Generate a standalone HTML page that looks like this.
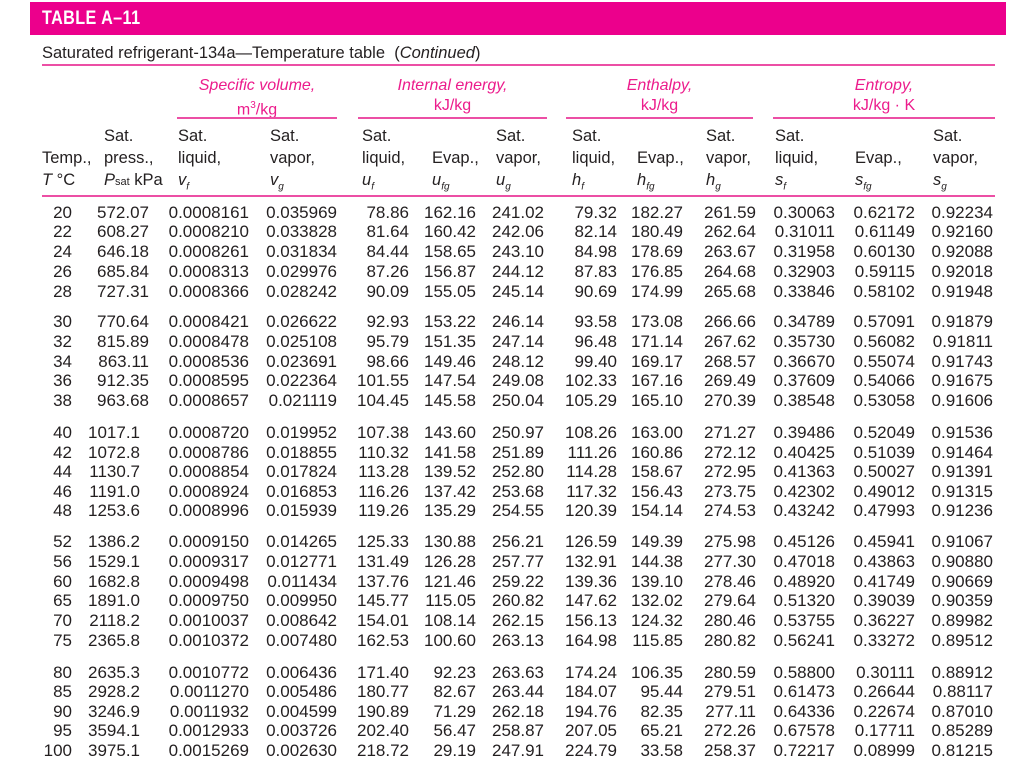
<!DOCTYPE html>
<html><head><meta charset="utf-8"><style>
body{margin:0;width:1024px;height:770px;background:#fff;position:relative;overflow:hidden;font-family:"Liberation Sans",sans-serif;color:#231f20;font-size:16px}
.bar{position:absolute;left:30px;top:2px;width:976px;height:33px;background:#ec008c}
.bar span{position:absolute;left:12px;top:6px;color:#fff;font-weight:bold;font-size:19px;transform:scaleX(0.85);transform-origin:left;letter-spacing:0.5px}
.sub{position:absolute;left:42px;top:44px;font-size:16.5px}
.ln{position:absolute;height:2px;background:#ec4fa5}
.g{position:absolute;color:#ec1c8c;text-align:center;font-size:16px;line-height:20px}
.h{position:absolute;line-height:22px;font-size:16.5px}
.r{position:absolute;left:0;width:1024px;height:20px;line-height:20px;font-size:17px}
.r span{position:absolute;text-align:right;white-space:nowrap}
.r span:nth-child(1){right:952px}.r span:nth-child(2){right:875px}.r span:nth-child(3){right:775px}.r span:nth-child(4){right:687px}.r span:nth-child(5){right:615px}.r span:nth-child(6){right:548px}.r span:nth-child(7){right:480px}.r span:nth-child(8){right:407px}.r span:nth-child(9){right:341px}.r span:nth-child(10){right:268px}.r span:nth-child(11){right:189px}.r span:nth-child(12){right:109px}.r span:nth-child(13){right:31px}
.r span.p1{right:884px!important}
i sub{font-size:10px}
</style></head><body>
<div class="bar"><span>TABLE A–11</span></div>
<div class="sub">Saturated refrigerant-134a—Temperature table &nbsp;(<i>Continued</i>)</div>
<div class="ln" style="left:42px;top:64px;width:953px"></div>
<div class="g" style="left:177px;top:76px;width:160px"><i>Specific volume,</i><br>m<sup style="font-size:10px">3</sup>/kg</div>
<div class="ln" style="left:177px;top:117px;width:160px"></div>
<div class="g" style="left:358px;top:76px;width:189px"><i>Internal energy,</i><br>kJ/kg</div>
<div class="ln" style="left:358px;top:117px;width:189px"></div>
<div class="g" style="left:566px;top:76px;width:187px"><i>Enthalpy,</i><br>kJ/kg</div>
<div class="ln" style="left:566px;top:117px;width:187px"></div>
<div class="g" style="left:773px;top:76px;width:222px"><i>Entropy,</i><br>kJ/kg · K</div>
<div class="ln" style="left:773px;top:117px;width:222px"></div>
<div class="h" style="left:42px;top:147px">Temp.,<br><i>T</i> °C</div>
<div class="h" style="left:104px;top:125px">Sat.<br>press.,<br><i>P</i><span style="font-size:11px">sat</span> kPa</div>
<div class="h" style="left:178px;top:125px">Sat.<br>liquid,<br><i>v<sub>f</sub></i></div>
<div class="h" style="left:270px;top:125px">Sat.<br>vapor,<br><i>v<sub>g</sub></i></div>
<div class="h" style="left:362px;top:125px">Sat.<br>liquid,<br><i>u<sub>f</sub></i></div>
<div class="h" style="left:432px;top:147px">Evap.,<br><i>u<sub>fg</sub></i></div>
<div class="h" style="left:496px;top:125px">Sat.<br>vapor,<br><i>u<sub>g</sub></i></div>
<div class="h" style="left:572px;top:125px">Sat.<br>liquid,<br><i>h<sub>f</sub></i></div>
<div class="h" style="left:637px;top:147px">Evap.,<br><i>h<sub>fg</sub></i></div>
<div class="h" style="left:706px;top:125px">Sat.<br>vapor,<br><i>h<sub>g</sub></i></div>
<div class="h" style="left:775px;top:125px">Sat.<br>liquid,<br><i>s<sub>f</sub></i></div>
<div class="h" style="left:855px;top:147px">Evap.,<br><i>s<sub>fg</sub></i></div>
<div class="h" style="left:933px;top:125px">Sat.<br>vapor,<br><i>s<sub>g</sub></i></div>
<div class="ln" style="left:42px;top:195px;width:953px"></div>

<div class="r" style="top:203px"><span>20</span><span>572.07</span><span>0.0008161</span><span>0.035969</span><span>78.86</span><span>162.16</span><span>241.02</span><span>79.32</span><span>182.27</span><span>261.59</span><span>0.30063</span><span>0.62172</span><span>0.92234</span></div>
<div class="r" style="top:222px"><span>22</span><span>608.27</span><span>0.0008210</span><span>0.033828</span><span>81.64</span><span>160.42</span><span>242.06</span><span>82.14</span><span>180.49</span><span>262.64</span><span>0.31011</span><span>0.61149</span><span>0.92160</span></div>
<div class="r" style="top:242px"><span>24</span><span>646.18</span><span>0.0008261</span><span>0.031834</span><span>84.44</span><span>158.65</span><span>243.10</span><span>84.98</span><span>178.69</span><span>263.67</span><span>0.31958</span><span>0.60130</span><span>0.92088</span></div>
<div class="r" style="top:262px"><span>26</span><span>685.84</span><span>0.0008313</span><span>0.029976</span><span>87.26</span><span>156.87</span><span>244.12</span><span>87.83</span><span>176.85</span><span>264.68</span><span>0.32903</span><span>0.59115</span><span>0.92018</span></div>
<div class="r" style="top:282px"><span>28</span><span>727.31</span><span>0.0008366</span><span>0.028242</span><span>90.09</span><span>155.05</span><span>245.14</span><span>90.69</span><span>174.99</span><span>265.68</span><span>0.33846</span><span>0.58102</span><span>0.91948</span></div>

<div class="r" style="top:312px"><span>30</span><span>770.64</span><span>0.0008421</span><span>0.026622</span><span>92.93</span><span>153.22</span><span>246.14</span><span>93.58</span><span>173.08</span><span>266.66</span><span>0.34789</span><span>0.57091</span><span>0.91879</span></div>
<div class="r" style="top:332px"><span>32</span><span>815.89</span><span>0.0008478</span><span>0.025108</span><span>95.79</span><span>151.35</span><span>247.14</span><span>96.48</span><span>171.14</span><span>267.62</span><span>0.35730</span><span>0.56082</span><span>0.91811</span></div>
<div class="r" style="top:352px"><span>34</span><span>863.11</span><span>0.0008536</span><span>0.023691</span><span>98.66</span><span>149.46</span><span>248.12</span><span>99.40</span><span>169.17</span><span>268.57</span><span>0.36670</span><span>0.55074</span><span>0.91743</span></div>
<div class="r" style="top:371px"><span>36</span><span>912.35</span><span>0.0008595</span><span>0.022364</span><span>101.55</span><span>147.54</span><span>249.08</span><span>102.33</span><span>167.16</span><span>269.49</span><span>0.37609</span><span>0.54066</span><span>0.91675</span></div>
<div class="r" style="top:391px"><span>38</span><span>963.68</span><span>0.0008657</span><span>0.021119</span><span>104.45</span><span>145.58</span><span>250.04</span><span>105.29</span><span>165.10</span><span>270.39</span><span>0.38548</span><span>0.53058</span><span>0.91606</span></div>

<div class="r" style="top:423px"><span>40</span><span class="p1">1017.1</span><span>0.0008720</span><span>0.019952</span><span>107.38</span><span>143.60</span><span>250.97</span><span>108.26</span><span>163.00</span><span>271.27</span><span>0.39486</span><span>0.52049</span><span>0.91536</span></div>
<div class="r" style="top:443px"><span>42</span><span class="p1">1072.8</span><span>0.0008786</span><span>0.018855</span><span>110.32</span><span>141.58</span><span>251.89</span><span>111.26</span><span>160.86</span><span>272.12</span><span>0.40425</span><span>0.51039</span><span>0.91464</span></div>
<div class="r" style="top:462px"><span>44</span><span class="p1">1130.7</span><span>0.0008854</span><span>0.017824</span><span>113.28</span><span>139.52</span><span>252.80</span><span>114.28</span><span>158.67</span><span>272.95</span><span>0.41363</span><span>0.50027</span><span>0.91391</span></div>
<div class="r" style="top:482px"><span>46</span><span class="p1">1191.0</span><span>0.0008924</span><span>0.016853</span><span>116.26</span><span>137.42</span><span>253.68</span><span>117.32</span><span>156.43</span><span>273.75</span><span>0.42302</span><span>0.49012</span><span>0.91315</span></div>
<div class="r" style="top:501px"><span>48</span><span class="p1">1253.6</span><span>0.0008996</span><span>0.015939</span><span>119.26</span><span>135.29</span><span>254.55</span><span>120.39</span><span>154.14</span><span>274.53</span><span>0.43242</span><span>0.47993</span><span>0.91236</span></div>

<div class="r" style="top:532px"><span>52</span><span class="p1">1386.2</span><span>0.0009150</span><span>0.014265</span><span>125.33</span><span>130.88</span><span>256.21</span><span>126.59</span><span>149.39</span><span>275.98</span><span>0.45126</span><span>0.45941</span><span>0.91067</span></div>
<div class="r" style="top:552px"><span>56</span><span class="p1">1529.1</span><span>0.0009317</span><span>0.012771</span><span>131.49</span><span>126.28</span><span>257.77</span><span>132.91</span><span>144.38</span><span>277.30</span><span>0.47018</span><span>0.43863</span><span>0.90880</span></div>
<div class="r" style="top:572px"><span>60</span><span class="p1">1682.8</span><span>0.0009498</span><span>0.011434</span><span>137.76</span><span>121.46</span><span>259.22</span><span>139.36</span><span>139.10</span><span>278.46</span><span>0.48920</span><span>0.41749</span><span>0.90669</span></div>
<div class="r" style="top:591px"><span>65</span><span class="p1">1891.0</span><span>0.0009750</span><span>0.009950</span><span>145.77</span><span>115.05</span><span>260.82</span><span>147.62</span><span>132.02</span><span>279.64</span><span>0.51320</span><span>0.39039</span><span>0.90359</span></div>
<div class="r" style="top:611px"><span>70</span><span class="p1">2118.2</span><span>0.0010037</span><span>0.008642</span><span>154.01</span><span>108.14</span><span>262.15</span><span>156.13</span><span>124.32</span><span>280.46</span><span>0.53755</span><span>0.36227</span><span>0.89982</span></div>
<div class="r" style="top:631px"><span>75</span><span class="p1">2365.8</span><span>0.0010372</span><span>0.007480</span><span>162.53</span><span>100.60</span><span>263.13</span><span>164.98</span><span>115.85</span><span>280.82</span><span>0.56241</span><span>0.33272</span><span>0.89512</span></div>

<div class="r" style="top:663px"><span>80</span><span class="p1">2635.3</span><span>0.0010772</span><span>0.006436</span><span>171.40</span><span>92.23</span><span>263.63</span><span>174.24</span><span>106.35</span><span>280.59</span><span>0.58800</span><span>0.30111</span><span>0.88912</span></div>
<div class="r" style="top:682px"><span>85</span><span class="p1">2928.2</span><span>0.0011270</span><span>0.005486</span><span>180.77</span><span>82.67</span><span>263.44</span><span>184.07</span><span>95.44</span><span>279.51</span><span>0.61473</span><span>0.26644</span><span>0.88117</span></div>
<div class="r" style="top:702px"><span>90</span><span class="p1">3246.9</span><span>0.0011932</span><span>0.004599</span><span>190.89</span><span>71.29</span><span>262.18</span><span>194.76</span><span>82.35</span><span>277.11</span><span>0.64336</span><span>0.22674</span><span>0.87010</span></div>
<div class="r" style="top:721px"><span>95</span><span class="p1">3594.1</span><span>0.0012933</span><span>0.003726</span><span>202.40</span><span>56.47</span><span>258.87</span><span>207.05</span><span>65.21</span><span>272.26</span><span>0.67578</span><span>0.17711</span><span>0.85289</span></div>
<div class="r" style="top:741px"><span>100</span><span class="p1">3975.1</span><span>0.0015269</span><span>0.002630</span><span>218.72</span><span>29.19</span><span>247.91</span><span>224.79</span><span>33.58</span><span>258.37</span><span>0.72217</span><span>0.08999</span><span>0.81215</span></div>
</body></html>
